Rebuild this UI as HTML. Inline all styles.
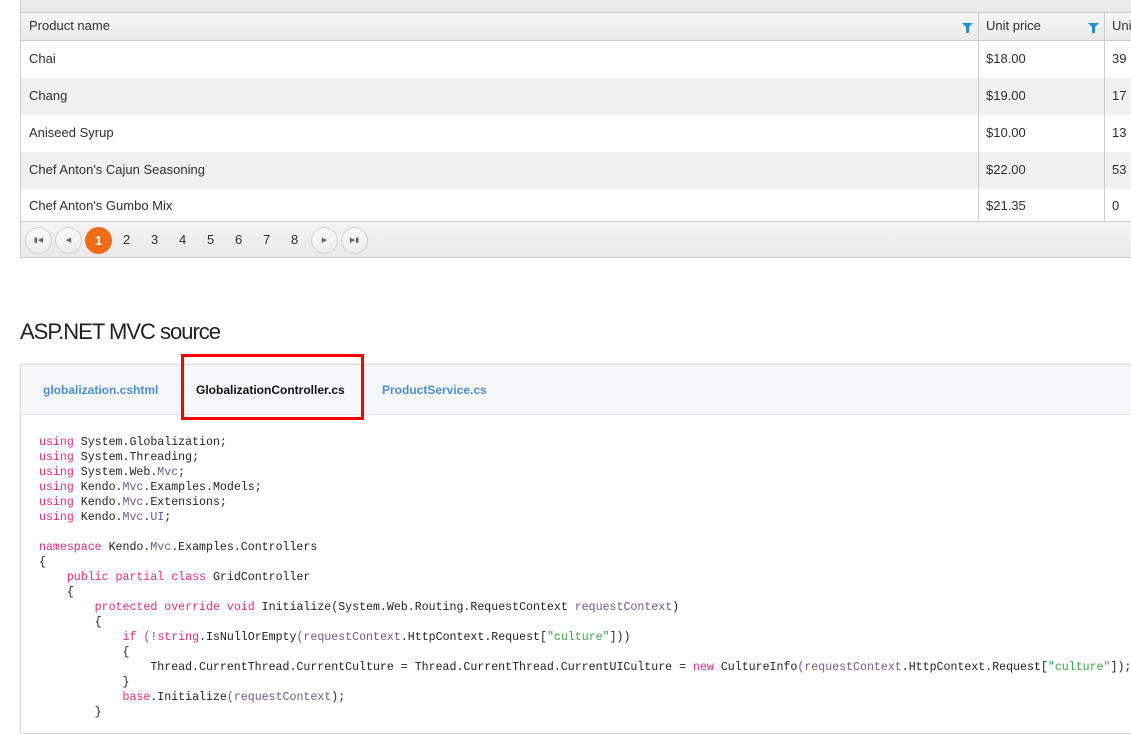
<!DOCTYPE html>
<html><head><meta charset="utf-8"><style>
*{margin:0;padding:0;box-sizing:border-box}
body{width:1131px;height:727px;overflow:hidden;background:#fff;font-family:"Liberation Sans",Arial,sans-serif;color:#2e2e2e;position:relative}
.a{position:absolute}
.top{left:20px;top:0;width:1111px;height:13px;background:#ebebeb;border-left:1px solid #ccc;border-bottom:1px solid #ccc}
.hdr{left:20px;top:12px;width:1111px;height:29px;background:linear-gradient(#f6f6f6,#eaeaea);border:1px solid #ccc;border-right:none;font-size:13px}
.row{left:20px;width:1111px;height:37px;border-left:1px solid #ccc;font-size:13px}
.cell{position:absolute;top:0;height:100%;line-height:35px}
.vl{position:absolute;top:0;bottom:0;width:1px;background:#ccc}
.pager{left:20px;top:221px;width:1111px;height:37px;background:linear-gradient(#f4f4f4,#e9e9e9);border:1px solid #ccc;border-right:none}
.pb{position:absolute;top:5px;width:27px;height:27px;border:1px solid #cfcfcf;border-radius:50%;background:linear-gradient(#fafafa,#ececec);font-size:7px;color:#666;text-align:center;line-height:25px}
.pn{position:absolute;top:4px;font-size:13px;line-height:27px;color:#2e2e2e}
.filt{position:absolute;top:9px;width:11px;height:11px}
pre{font-family:"Liberation Mono",monospace;font-size:11.6px;line-height:15px;color:#222}
.k{color:#ec2a7a}.t{color:#6b5b8f}.s{color:#3aa84a}
</style></head><body>
<div class="a top"></div>
<div class="a hdr">
 <span class="a" style="left:8px;top:5px">Product name</span>
 <svg class="filt" style="left:941px" viewBox="0 0 11 11"><path d="M0 1H11L7 5V11H4V5Z" fill="#1a8fd6"/></svg>
 <div class="vl" style="left:957px"></div>
 <span class="a" style="left:965px;top:5px">Unit price</span>
 <svg class="filt" style="left:1067px" viewBox="0 0 11 11"><path d="M0 1H11L7 5V11H4V5Z" fill="#1a8fd6"/></svg>
 <div class="vl" style="left:1083px"></div>
 <span class="a" style="left:1091px;top:5px">Uni</span>
</div>
<div class="a row" style="top:41px;background:#fff"><span class="cell" style="left:8px">Chai</span><div class="vl" style="left:957px"></div><span class="cell" style="left:965px">$18.00</span><div class="vl" style="left:1083px"></div><span class="cell" style="left:1091px">39</span></div>
<div class="a row" style="top:78px;background:#f0f0f0"><span class="cell" style="left:8px">Chang</span><div class="vl" style="left:957px"></div><span class="cell" style="left:965px">$19.00</span><div class="vl" style="left:1083px"></div><span class="cell" style="left:1091px">17</span></div>
<div class="a row" style="top:115px;background:#fff"><span class="cell" style="left:8px">Aniseed Syrup</span><div class="vl" style="left:957px"></div><span class="cell" style="left:965px">$10.00</span><div class="vl" style="left:1083px"></div><span class="cell" style="left:1091px">13</span></div>
<div class="a row" style="top:152px;background:#f0f0f0"><span class="cell" style="left:8px">Chef Anton's Cajun Seasoning</span><div class="vl" style="left:957px"></div><span class="cell" style="left:965px">$22.00</span><div class="vl" style="left:1083px"></div><span class="cell" style="left:1091px">53</span></div>
<div class="a row" style="top:189px;height:32px;background:#fff"><span class="cell" style="left:8px;line-height:34px">Chef Anton's Gumbo Mix</span><div class="vl" style="left:957px"></div><span class="cell" style="left:965px;line-height:34px">$21.35</span><div class="vl" style="left:1083px"></div><span class="cell" style="left:1091px;line-height:34px">0</span></div>
<div class="a pager">
 <div class="pb" style="left:4px">&#x25AE;&#x25C0;</div>
 <div class="pb" style="left:34px">&#x25C0;</div>
 <div class="pb" style="left:64px;border:none;background:#f26b14;color:#fff;font-size:13px;font-weight:bold;line-height:27px">1</div>
 <span class="pn" style="left:102px">2</span><span class="pn" style="left:130px">3</span><span class="pn" style="left:158px">4</span><span class="pn" style="left:186px">5</span><span class="pn" style="left:214px">6</span><span class="pn" style="left:242px">7</span><span class="pn" style="left:270px">8</span>
 <div class="pb" style="left:290px">&#x25B6;</div>
 <div class="pb" style="left:320px">&#x25B6;&#x25AE;</div>
</div>
<div class="a" style="left:20px;top:319px;font-size:22px;letter-spacing:-1px;color:#222">ASP.NET MVC source</div>
<div class="a" style="left:20px;top:364px;width:1111px;height:370px;border:1px solid #ddd;border-right:none;box-shadow:0 0 3px #ddd"></div>
<div class="a" style="left:21px;top:365px;width:1110px;height:50px;background:#f5f6f7;border-bottom:1px solid #e3e3e3;font-size:12px;font-weight:bold">
 <span class="a" style="left:22px;top:18px;color:#4a8fd4">globalization.cshtml</span>
 <span class="a" style="left:175px;top:18px;color:#111">GlobalizationController.cs</span>
 <span class="a" style="left:361px;top:18px;color:#4a8fd4">ProductService.cs</span>
</div>
<div class="a" style="left:181px;top:354px;width:183px;height:66px;border:3px solid #f00"></div>
<pre class="a" style="left:39px;top:435px"><span class="k">using</span> System.Globalization;
<span class="k">using</span> System.Threading;
<span class="k">using</span> System.Web.<span class="t">Mvc</span>;
<span class="k">using</span> Kendo.<span class="t">Mvc</span>.Examples.Models;
<span class="k">using</span> Kendo.<span class="t">Mvc</span>.Extensions;
<span class="k">using</span> Kendo.<span class="t">Mvc</span>.<span class="t">UI</span>;

<span class="k">namespace</span> Kendo.<span class="t">Mvc</span>.Examples.Controllers
{
    <span class="k">public partial class</span> GridController
    {
        <span class="k">protected override void</span> Initialize(System.Web.Routing.RequestContext <span class="t">requestContext</span>)
        {
            <span class="k">if</span> <span class="t">(!</span><span class="k">string</span>.IsNullOrEmpty<span class="t">(requestContext</span>.HttpContext.Request[<span class="s">"culture"</span>]))
            {
                Thread.CurrentThread.CurrentCulture = Thread.CurrentThread.CurrentUICulture = <span class="k">new</span> CultureInfo<span class="t">(requestContext</span>.HttpContext.Request[<span class="s">"culture"</span>]);
            }
            <span class="k">base</span>.Initialize<span class="t">(requestContext</span>);
        }</pre>
</body></html>
